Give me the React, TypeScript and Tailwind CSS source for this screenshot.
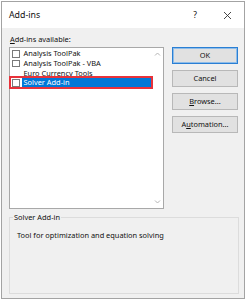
import React from "react";

const font = { fontFamily: '"Noto Sans", "Open Sans", sans-serif' };

const items = [
  { name: "Analysis ToolPak", box: true },
  { name: "Analysis ToolPak - VBA", box: true },
  { name: "Euro Currency Tools", box: false },
  { name: "Solver Add-in", box: true, selected: true },
];

const Button: React.FC<{ primary?: boolean; children: React.ReactNode }> = ({ primary, children }) => (
  <div
    className={`h-[17px] w-[66px] flex items-center justify-center bg-[#e1e1e1] text-[7.4px] text-[#111] ${
      primary ? "border border-[#2a7fd4] shadow-[inset_0_0_0_1px_#8fbde9]" : "border border-[#b8b8b8]"
    }`}
  >
    {children}
  </div>
);

const Chevron: React.FC<{ down?: boolean }> = ({ down }) => (
  <svg width="7" height="5" viewBox="0 0 7 5" className="block">
    <path
      d={down ? "M1 1.5 L3.5 4 L6 1.5" : "M1 3.5 L3.5 1 L6 3.5"}
      fill="none"
      stroke="#b5b5b5"
      strokeWidth="1"
    />
  </svg>
);

export default function App() {
  return (
    <div className="w-[247px] h-[300px] bg-white pl-[1px] pt-[1px]" style={font}>
      <div className="w-[244px] h-[298px] border border-[#a3a3a3] flex flex-col bg-[#f0f0f0]">
        {/* title bar */}
        <div className="h-[26px] bg-white flex items-center pl-[7px] pr-[12px] text-[#111]">
          <span className="text-[8.8px] leading-none">Add-ins</span>
          <span className="ml-auto text-[8.5px] leading-none mr-[26px]">?</span>
          <svg width="9" height="9" viewBox="0 0 9 9">
            <path d="M1 1 L8 8 M8 1 L1 8" stroke="#333" strokeWidth="0.9" />
          </svg>
        </div>

        {/* body */}
        <div className="flex flex-col pl-[7px] pr-[5px]">
          <div className="pt-[6px] h-[19px] text-[7.4px] leading-[10px] text-[#111] pl-[1px]">
            <span className="underline">A</span>dd-ins available:
          </div>

          <div className="flex gap-[8px]">
            {/* list box */}
            <div className="relative w-[155px] h-[162px] bg-white border border-[#a8a8a8] flex">
              <div className="flex-1 pt-[1px] flex flex-col">
                {items.map((it) => (
                  <div key={it.name} className="h-[9.7px] flex items-center">
                    <div className="w-[12px] h-full flex items-center justify-center">
                      {it.box && <div className="w-[7.5px] h-[7.5px] bg-white border border-[#7a7a7a]" />}
                    </div>
                    <div
                      className={`h-full flex items-center pl-[1.5px] flex-1 text-[7.4px] leading-none ${
                        it.selected ? "bg-[#0078d7] text-white" : "text-[#111]"
                      }`}
                    >
                      {it.name}
                    </div>
                  </div>
                ))}
              </div>
              {/* scrollbar */}
              <div className="w-[12px] flex flex-col items-center justify-between py-[4px]">
                <Chevron />
                <Chevron down />
              </div>
              {/* red highlight annotation */}
              <div className="absolute left-[-1px] top-[28px] w-[144px] h-[13px] border-2 border-[#e8323a]" />
            </div>

            {/* buttons */}
            <div className="flex flex-col gap-[6px]">
              <Button primary>OK</Button>
              <Button>Cancel</Button>
              <Button>
                <span>
                  <span className="underline">B</span>rowse...
                </span>
              </Button>
              <Button>
                <span>
                  A<span className="underline">u</span>tomation...
                </span>
              </Button>
            </div>
          </div>

          {/* group box */}
          <div className="relative mt-[8px] w-[230px] h-[77px] border border-[#dcdcdc]">
            <span className="absolute left-[3px] top-[-6px] px-[1px] bg-[#f0f0f0] text-[7.4px] leading-[10px] text-[#111]">
              Solver Add-in
            </span>
            <div className="pl-[7px] pt-[12px] text-[7.4px] leading-[10px] text-[#111]">
              Tool for optimization and equation solving
            </div>
          </div>
        </div>
      </div>
    </div>
  );
}
